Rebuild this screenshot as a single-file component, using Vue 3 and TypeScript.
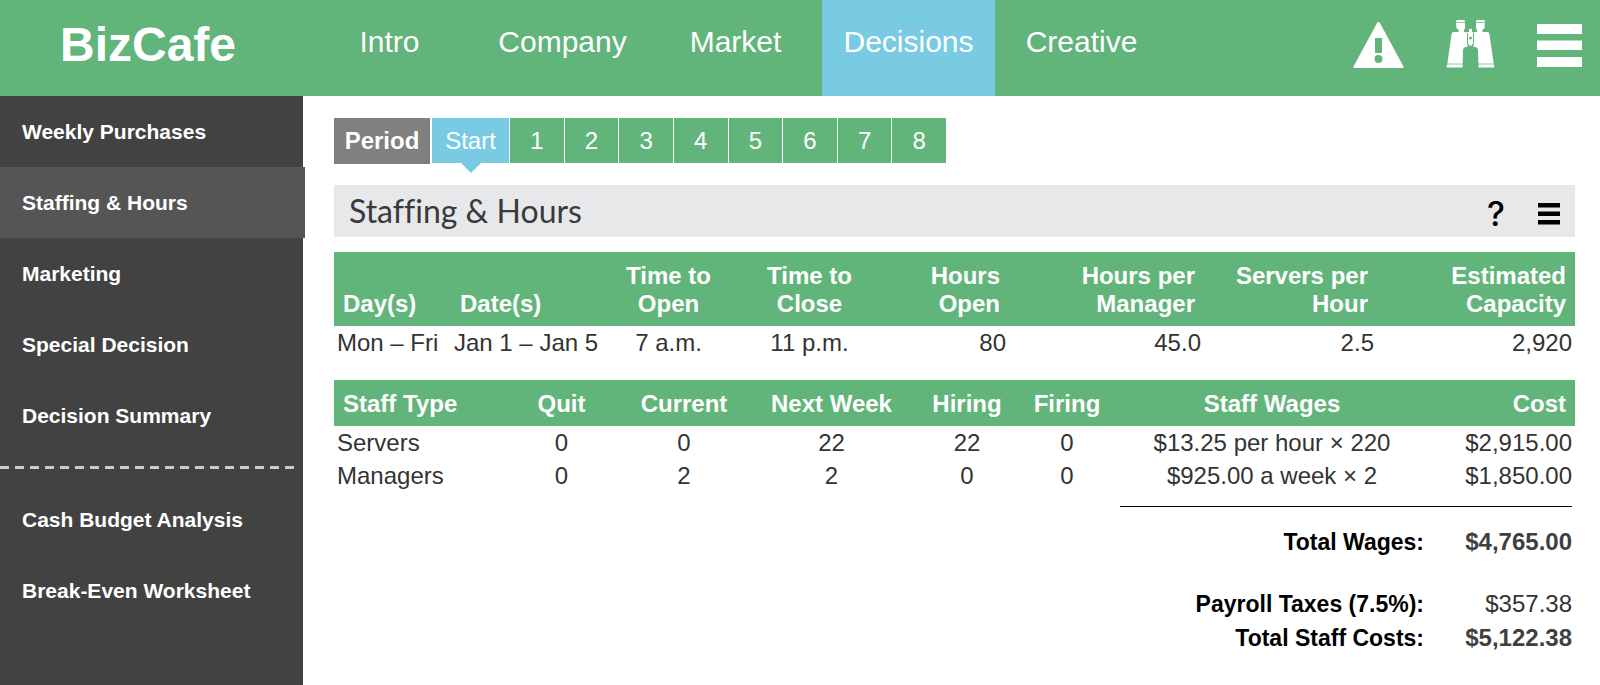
<script setup lang="ts">
import { ref } from 'vue'

type Align = 'left' | 'center' | 'right'
interface Column {
  label: string
  width: number
  align: Align
}

const sections = ['Intro', 'Company', 'Market', 'Decisions', 'Creative']
const activeSection = ref('Decisions')

const decisionPages = ['Weekly Purchases', 'Staffing & Hours', 'Marketing', 'Special Decision', 'Decision Summary']
const toolPages = ['Cash Budget Analysis', 'Break-Even Worksheet']
const activePage = ref('Staffing & Hours')

const periods = ['Start', '1', '2', '3', '4', '5', '6', '7', '8']
const activePeriod = ref('Start')

const hoursColumns: Column[] = [
  { label: 'Day(s)', width: 117, align: 'left' },
  { label: 'Date(s)', width: 147, align: 'left' },
  { label: 'Time to\nOpen', width: 141, align: 'center' },
  { label: 'Time to\nClose', width: 141, align: 'center' },
  { label: 'Hours\nOpen', width: 129, align: 'right' },
  { label: 'Hours per\nManager', width: 195, align: 'right' },
  { label: 'Servers per\nHour', width: 173, align: 'right' },
  { label: 'Estimated\nCapacity', width: 198, align: 'right' },
]
const hoursRows = [['Mon – Fri', 'Jan 1 – Jan 5', '7 a.m.', '11 p.m.', '80', '45.0', '2.5', '2,920']]

const staffColumns: Column[] = [
  { label: 'Staff Type', width: 166, align: 'left' },
  { label: 'Quit', width: 123, align: 'center' },
  { label: 'Current', width: 122, align: 'center' },
  { label: 'Next Week', width: 173, align: 'center' },
  { label: 'Hiring', width: 98, align: 'center' },
  { label: 'Firing', width: 102, align: 'center' },
  { label: 'Staff Wages', width: 308, align: 'center' },
  { label: 'Cost', width: 149, align: 'right' },
]
const staffRows = [
  ['Servers', '0', '0', '22', '22', '0', '$13.25 per hour × 220', '$2,915.00'],
  ['Managers', '0', '2', '2', '0', '0', '$925.00 a week × 2', '$1,850.00'],
]

const tables = [
  { name: 'hours', columns: hoursColumns, rows: hoursRows },
  { name: 'staff', columns: staffColumns, rows: staffRows },
]

const share = (columns: Column[], column: Column): string =>
  `${(column.width / columns.reduce((sum, c) => sum + c.width, 0)) * 100}%`
</script>

<template>
  <div class="page">
    <header class="topbar">
      <a class="brand" href="#">BizCafe</a>
      <nav class="sections" aria-label="Sections">
        <a
          v-for="name in sections"
          :key="name"
          href="#"
          class="section"
          :class="{ active: name === activeSection }"
          @click.prevent="activeSection = name"
        >{{ name }}</a>
      </nav>
      <div class="actions">
        <button type="button" class="action" aria-label="Alerts">
          <svg width="51" height="48" viewBox="0 0 51 48">
            <path d="M25.500 3.500 L49 47 H2 Z" fill="#fff" stroke="#fff" stroke-width="3" stroke-linejoin="round" />
            <path d="M22 18h7v15h-7z" fill="#62b57a" />
            <circle cx="25.500" cy="39" r="4" fill="#62b57a" />
          </svg>
        </button>
        <button type="button" class="action" aria-label="Explore">
          <svg width="49" height="48" viewBox="0 0 49 48" fill="#fff">
            <path d="M10 1.500q0-1.500 1.500-1.500h6q1.500 0 1.500 1.500v7l-1 1v2.500h2l1.500 2v13h-1.500q-2.500 0-3 3l-.5 17.500h-16l1-5 4-28q0-2.500 2-2.500h5v-2.500l-2-1z" />
            <path d="M39 1.500q0-1.500-1.500-1.500h-6q-1.500 0-1.500 1.500v7l1 1v2.500h-2l-1.500 2v13h1.500q2.500 0 3 3l.5 17.500h16l-1-5-4-28q0-2.500-2-2.500h-5v-2.500l2-1z" />
            <path d="M20.500 12h2.500v-3h3v3h2.500v12h-2.500v1.500h-3v-1.500h-2.500z" />
            <g fill="none" stroke="#62b57a" stroke-width="1">
              <path d="M10 2.500h9M30 2.500h9M1 44h16M32 44h16" stroke-opacity=".7" />
              <path d="M21.500 13v11M27.500 13v11" />
            </g>
            <circle cx="24.500" cy="18" r="1.500" fill="#62b57a" />
          </svg>
        </button>
        <button type="button" class="action" aria-label="Menu">
          <svg width="45" height="48" viewBox="0 0 45 48" fill="#fff">
            <path d="M0 4h45v10H0zM0 20.500h45v9.500H0zM0 37h45v10H0z" />
          </svg>
        </button>
      </div>
    </header>

    <div class="body">
      <nav class="sidebar" aria-label="Decision pages">
        <a
          v-for="name in decisionPages"
          :key="name"
          href="#"
          class="side-link"
          :class="{ active: name === activePage }"
          @click.prevent="activePage = name"
        >{{ name }}</a>
        <hr class="divider">
        <a
          v-for="name in toolPages"
          :key="name"
          href="#"
          class="side-link"
          :class="{ active: name === activePage }"
          @click.prevent="activePage = name"
        >{{ name }}</a>
      </nav>

      <main class="content">
        <div class="period">
          <span id="period-label" class="period-label">Period</span>
          <div class="period-tabs" role="group" aria-labelledby="period-label">
            <button
              v-for="p in periods"
              :key="p"
              type="button"
              class="period-tab"
              :class="{ active: p === activePeriod }"
              :aria-pressed="p === activePeriod"
              @click="activePeriod = p"
            >{{ p }}</button>
          </div>
        </div>

        <div class="titlebar">
          <h1>Staffing &amp; Hours</h1>
          <button type="button" class="help" aria-label="Help">?</button>
          <button type="button" class="options" aria-label="Options">
            <svg width="22" height="22" viewBox="0 0 22 22">
              <path d="M0 0h22v4.500H0zM0 8.500h22v4.500H0zM0 17h22v4.500H0z" fill="#000" />
            </svg>
          </button>
        </div>

        <table v-for="table in tables" :key="table.name" class="grid">
          <colgroup>
            <col v-for="c in table.columns" :key="c.label" :style="{ width: share(table.columns, c) }">
          </colgroup>
          <thead>
            <tr>
              <th v-for="c in table.columns" :key="c.label" scope="col" :class="c.align">{{ c.label }}</th>
            </tr>
          </thead>
          <tbody>
            <tr v-for="row in table.rows" :key="row[0]">
              <td v-for="(cell, i) in row" :key="i" :class="table.columns[i].align">{{ cell }}</td>
            </tr>
          </tbody>
        </table>

        <dl class="totals">
          <div class="total">
            <dt>Total Wages:</dt>
            <dd class="strong">$4,765.00</dd>
          </div>
          <div class="total spaced">
            <dt>Payroll Taxes (7.5%):</dt>
            <dd>$357.38</dd>
          </div>
          <div class="total">
            <dt>Total Staff Costs:</dt>
            <dd class="strong">$5,122.38</dd>
          </div>
        </dl>
      </main>
    </div>
  </div>
</template>

<style>
body {
  background: #fff;
}
</style>

<style scoped>
.page {
  display: flex;
  flex-direction: column;
  min-height: 100vh;
  font-family: "Liberation Sans", Arial, sans-serif;
  font-size: 24px;
  color: #333;
}
a {
  color: inherit;
  text-decoration: none;
}
button {
  margin: 0;
  padding: 0;
  border: 0;
  background: none;
  font: inherit;
  color: inherit;
  cursor: pointer;
}
svg {
  display: block;
}

.topbar {
  display: flex;
  height: 96px;
  background: #62b57a;
  color: #fff;
}
.brand {
  box-sizing: border-box;
  flex: 0 0 303px;
  padding-left: 60px;
  font-size: 48px;
  font-weight: bold;
  line-height: 90px;
}
.sections {
  display: flex;
}
.section {
  width: 173px;
  font-size: 30px;
  line-height: 84px;
  text-align: center;
}
.section.active {
  background: #79cbe3;
}
.actions {
  display: flex;
  gap: 42px;
  align-items: flex-start;
  margin-left: auto;
  padding: 20px 18px 0 0;
}

.body {
  display: flex;
  flex: 1;
}
.sidebar {
  flex: 0 0 303px;
  background: #424242;
  color: #fff;
}
.side-link {
  display: block;
  padding-left: 22px;
  font-size: 21px;
  font-weight: bold;
  line-height: 71px;
}
.side-link.active {
  margin-right: -2px;
  background: #555;
}
.divider {
  height: 3px;
  margin: 15px 7px 15px 0;
  border: 0;
  background: repeating-linear-gradient(to right, #ccc 0 9px, transparent 9px 15px);
}

.content {
  flex: 1;
  min-width: 0;
  padding: 22px 25px 22px 31px;
}
.period {
  display: flex;
  gap: 2px;
  align-items: flex-start;
}
.period-label {
  width: 96px;
  background: #808080;
  color: #fff;
  font-weight: bold;
  line-height: 46px;
  text-align: center;
}
.period-tabs {
  display: flex;
  gap: 1px;
  width: 514px;
}
.period-tab {
  position: relative;
  flex: 1;
  background: #62b57a;
  color: #fff;
  line-height: 45px;
}
.period-tab:first-child {
  flex: 0 0 77px;
}
.period-tab.active {
  background: #79cbe3;
}
.period-tab.active::after {
  position: absolute;
  top: 100%;
  left: 50%;
  margin-left: -10px;
  border: 10px solid transparent;
  border-top-color: #79cbe3;
  border-bottom: 0;
  content: "";
}

.titlebar {
  display: flex;
  align-items: center;
  height: 52px;
  margin: 21px 0 15px;
  padding: 0 15px;
  background: #e7e8ea;
}
.titlebar h1 {
  margin: 0;
  flex: 1;
  color: #3a3a3c;
  font-family: "Trebuchet MS", Lato, sans-serif;
  font-size: 32px;
  font-variant-ligatures: none;
  font-weight: normal;
  line-height: 52px;
}
.help {
  padding-top: 6px;
  margin-right: 33px;
  color: #000;
  font-family: Inter, sans-serif;
  font-size: 34px;
  font-weight: 500;
  line-height: 46px;
}
.options {
  padding-top: 5px;
}

.grid {
  width: 100%;
  margin-bottom: 21px;
  border-collapse: collapse;
  table-layout: fixed;
}
.grid:last-of-type {
  margin-bottom: 14px;
}
.grid th {
  padding: 10px 9px 8px;
  background: #62b57a;
  color: #fff;
  line-height: 28px;
  vertical-align: bottom;
  white-space: pre-line;
}
.grid td {
  padding: 0 3px;
  line-height: 33px;
  white-space: nowrap;
}
.grid .left {
  text-align: left;
}
.grid .center {
  padding-right: 0;
  padding-left: 0;
  text-align: center;
}
.grid .right {
  text-align: right;
}

.totals {
  width: 452px;
  margin: 0 3px 0 auto;
  padding-top: 18px;
  border-top: 1px solid #000;
  line-height: 34px;
}
.total {
  display: flex;
  justify-content: flex-end;
}
.total.spaced {
  margin-top: 28px;
}
.total dt {
  color: #000;
  font-size: 23px;
  font-weight: bold;
}
.total dd {
  width: 148px;
  margin: 0;
  text-align: right;
}
.total .strong {
  color: #3f3f41;
  font-weight: bold;
}
</style>
